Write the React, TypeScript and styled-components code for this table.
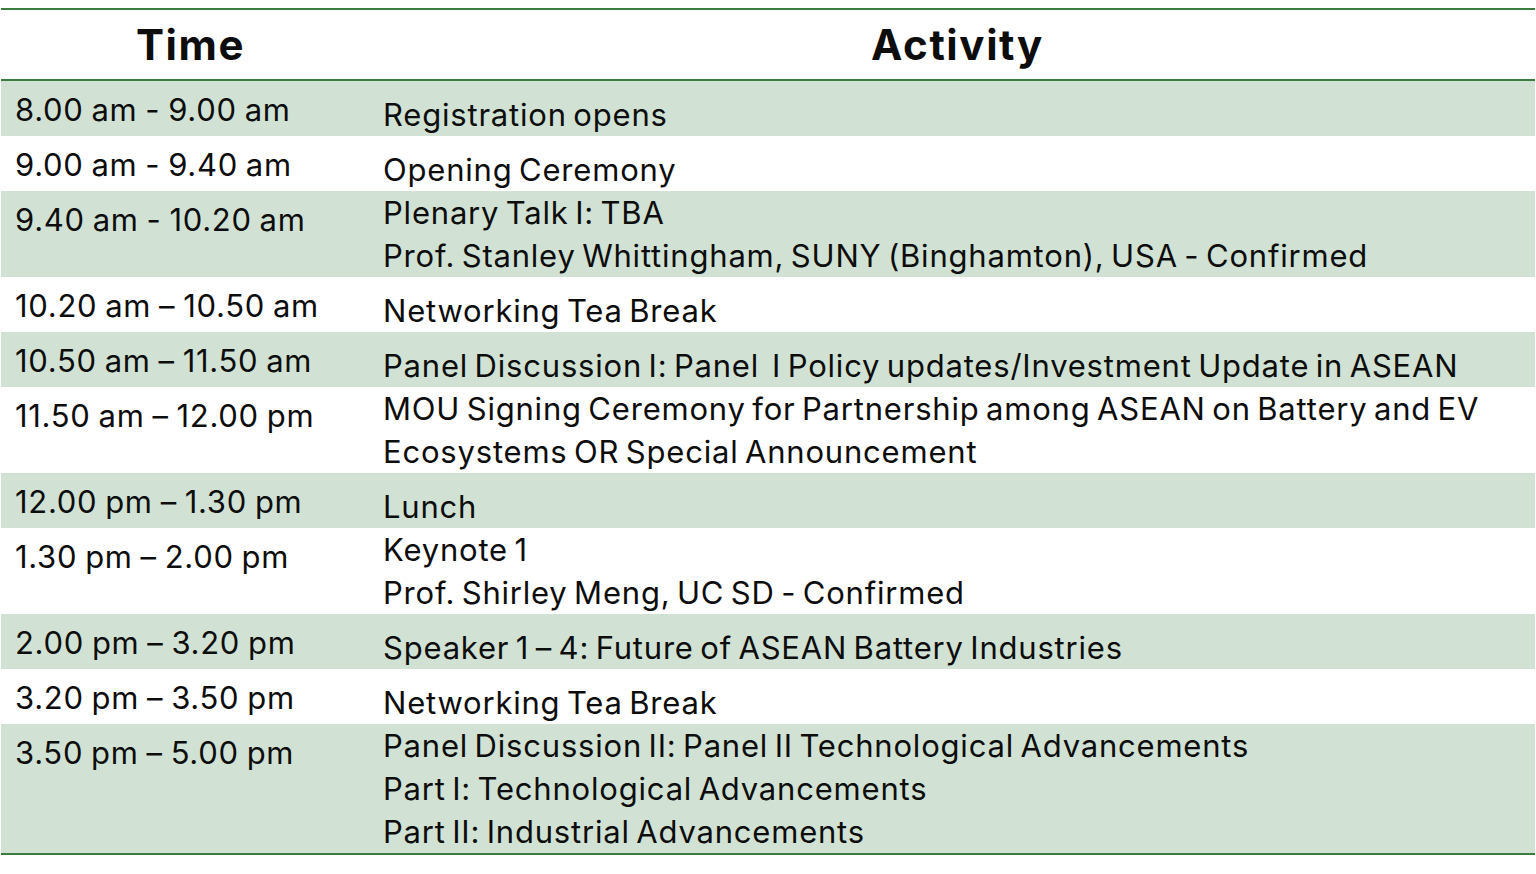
import React from 'react';
import styled, { createGlobalStyle } from 'styled-components';

const colors = {
  line: '#3a7d3f',
  shade: '#d1e2d4',
  text: '#0d0d0d',
};

const GlobalStyle = createGlobalStyle`
  body {
    margin: 0;
    background: #ffffff;
    font-family: Inter, "Noto Sans", "Liberation Sans", sans-serif;
    color: ${colors.text};
  }
`;

const Page = styled.div`
  padding-top: 8px;
`;

const Table = styled.div`
  border-top: 2px solid ${colors.line};
  border-bottom: 2px solid ${colors.line};
  margin: 0 1px;
`;

const HeaderRow = styled.div`
  display: grid;
  grid-template-columns: 370px 1fr;
  align-items: center;
  height: 69px;
  border-bottom: 2px solid ${colors.line};
`;

const HeaderCell = styled.div`
  padding-left: 9px;
  text-align: center;
  font-size: 42px;
  font-weight: 700;
  letter-spacing: 1.6px;
`;

const Row = styled.div<{ $shaded: boolean }>`
  display: grid;
  grid-template-columns: 369px 1fr;
  background: ${(p) => (p.$shaded ? colors.shade : 'transparent')};
`;

const TimeCell = styled.div`
  padding: 7px 0 0 14px;
  font-size: 31px;
  line-height: 43px;
  letter-spacing: 0.7px;
  word-spacing: -1.5px;
  white-space: pre;
`;

const ActivityCell = styled.div<{ $multi: boolean }>`
  padding: ${(p) => (p.$multi ? '0' : '12px')} 0 0 13px;
  font-size: 31px;
  line-height: 43px;
  letter-spacing: 0.8px;
  word-spacing: -3px;
  white-space: pre;
`;

const schedule = [
  { time: '8.00 am - 9.00 am', lines: ['Registration opens'] },
  { time: '9.00 am - 9.40 am', lines: ['Opening Ceremony'] },
  {
    time: '9.40 am - 10.20 am',
    lines: ['Plenary Talk I: TBA', 'Prof. Stanley Whittingham, SUNY (Binghamton), USA - Confirmed'],
  },
  { time: '10.20 am \u2013 10.50 am', lines: ['Networking Tea Break'] },
  {
    time: '10.50 am \u2013 11.50 am',
    lines: ['Panel Discussion I: Panel  I Policy updates/Investment Update in ASEAN'],
  },
  {
    time: '11.50 am \u2013 12.00 pm',
    lines: ['MOU Signing Ceremony for Partnership among ASEAN on Battery and EV', 'Ecosystems OR Special Announcement'],
  },
  { time: '12.00 pm \u2013 1.30 pm', lines: ['Lunch'] },
  { time: '1.30 pm \u2013 2.00 pm', lines: ['Keynote 1', 'Prof. Shirley Meng, UC SD - Confirmed'] },
  { time: '2.00 pm \u2013 3.20 pm', lines: ['Speaker 1 \u2013 4: Future of ASEAN Battery Industries'] },
  { time: '3.20 pm \u2013 3.50 pm', lines: ['Networking Tea Break'] },
  {
    time: '3.50 pm \u2013 5.00 pm',
    lines: [
      'Panel Discussion II: Panel II Technological Advancements',
      'Part I: Technological Advancements',
      'Part II: Industrial Advancements',
    ],
  },
];

const App = () => {
  return (
    <Page>
      <GlobalStyle />
      <Table>
        <HeaderRow>
          <HeaderCell>Time</HeaderCell>
          <HeaderCell>Activity</HeaderCell>
        </HeaderRow>
        {schedule.map((item, i) => (
          <Row key={item.time} $shaded={i % 2 === 0}>
            <TimeCell>{item.time}</TimeCell>
            <ActivityCell $multi={item.lines.length > 1}>
              {item.lines.map((line) => (
                <div key={line}>{line}</div>
              ))}
            </ActivityCell>
          </Row>
        ))}
      </Table>
    </Page>
  );
};

export default App;
